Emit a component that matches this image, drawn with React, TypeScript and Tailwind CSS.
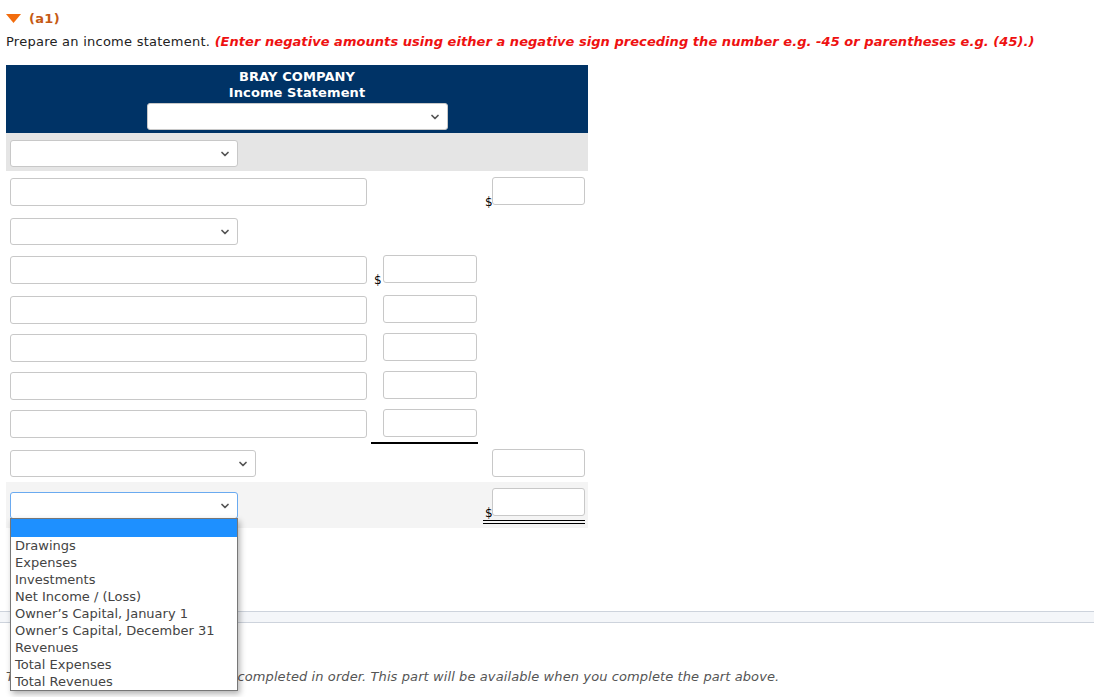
import { ChevronDown } from 'lucide-react';

const font = "font-['Verdana','DejaVu_Sans',sans-serif]";

function Select({ w, focused }: { w: string; focused?: boolean }) {
  return (
    <div
      className={`${w} h-[27px] bg-white rounded-[3px] border flex items-center justify-end pr-[6px] ${
        focused ? 'border-[#6aaaf0]' : 'border-[#c8c8c8]'
      }`}
    >
      <ChevronDown size={12} strokeWidth={3.5} className="text-[#555]" />
    </div>
  );
}

function Input({ w }: { w: string }) {
  return <div className={`${w} h-[28px] bg-white rounded-[3px] border border-[#c8c8c8]`} />;
}

function Dollar() {
  return <span className="block text-[12px] leading-none text-black w-[9px] -mb-[3px]">$</span>;
}

const options = [
  'Drawings',
  'Expenses',
  'Investments',
  'Net Income / (Loss)',
  'Owner’s Capital, January 1',
  'Owner’s Capital, December 31',
  'Revenues',
  'Total Expenses',
  'Total Revenues',
];

// label cell | middle amount cell | right amount cell
function Row({
  h,
  label,
  mid,
  right,
  midLine,
  rightLine,
}: {
  h: string;
  label: React.ReactNode;
  mid?: 'dollar' | 'plain';
  right?: 'dollar' | 'plain';
  midLine?: boolean;
  rightLine?: boolean;
}) {
  return (
    <div className={`flex ${h}`}>
      <div className="w-[365px] pl-[4px] pt-[7px]">{label}</div>
      <div className="w-[112px] pt-[6px]">
        {mid && (
          <div className="flex items-end h-[28px]">
            <span className="w-[12px] pl-[3px]">{mid === 'dollar' && <Dollar />}</span>
            <Input w="w-[94px]" />
          </div>
        )}
        {midLine && <div className="mt-[5px] h-[2px] bg-black w-[107px]" />}
      </div>
      <div className="w-[105px] pt-[6px]">
        {right && (
          <div className="flex items-end h-[28px]">
            <span className="w-[9px] pl-[2px]">{right === 'dollar' && <Dollar />}</span>
            <Input w="w-[93px]" />
          </div>
        )}
        {rightLine && <div className="mt-[5px] h-[2px] bg-black w-[104px]" />}
      </div>
    </div>
  );
}

export default function App() {
  return (
    <div className={`${font} relative w-[1094px] h-[697px] bg-white text-[13px] text-[#222] overflow-hidden`}>
      <div className="px-[6px] pt-[10px]">
        <div className="flex items-center gap-[8px] h-[17px]">
          <svg width="15" height="9" viewBox="0 0 15 9">
            <polygon points="0,0 15,0 7.5,9" fill="#f26c0d" />
          </svg>
          <span className="font-bold text-[#c65a14] tracking-[0.3px]">(a1)</span>
        </div>
        <p className="mt-[7px] leading-[16px] tracking-[0.25px]">
          Prepare an income statement.{' '}
          <span className="font-bold italic text-[#ee1111] tracking-[0.05px]">
            (Enter negative amounts using either a negative sign preceding the number e.g. -45 or parentheses e.g.
            (45).)
          </span>
        </p>
      </div>

      <div className="ml-[6px] mt-[15px] w-[582px]">
        <div className="h-[68px] bg-[#003366] flex flex-col items-center pt-[4px] text-white font-bold leading-[16px] tracking-[0.1px]">
          <span>BRAY COMPANY</span>
          <span>Income Statement</span>
          <div className="mt-[2px]">
            <Select w="w-[301px]" />
          </div>
        </div>
        <div className="h-[38px] bg-[#e5e5e5] pl-[4px] pt-[7px]">
          <Select w="w-[228px]" />
        </div>

        <Row h="h-[40px]" label={<Input w="w-[357px]" />} right="dollar" />
        <Row h="h-[38px]" label={<Select w="w-[228px]" />} />
        <Row h="h-[40px]" label={<Input w="w-[357px]" />} mid="dollar" />
        <Row h="h-[38px]" label={<Input w="w-[357px]" />} mid="plain" />
        <Row h="h-[38px]" label={<Input w="w-[357px]" />} mid="plain" />
        <Row h="h-[38px]" label={<Input w="w-[357px]" />} mid="plain" />
        <Row h="h-[40px]" label={<Input w="w-[357px]" />} mid="plain" midLine />
        <Row h="h-[39px]" label={<Select w="w-[246px]" />} right="plain" rightLine />

        <div className="relative flex h-[46px] bg-[#f4f4f4]">
          <div className="w-[477px] pl-[4px] pt-[10px]">
            <Select w="w-[228px]" focused />
          </div>
          <div className="w-[105px] pt-[6px]">
            <div className="flex items-end h-[28px]">
              <span className="w-[9px] pl-[2px]">
                <Dollar />
              </span>
              <Input w="w-[93px]" />
            </div>
            <div className="mt-[4px] w-[102px] h-[4px] border-y border-black" />
          </div>

          <div className="absolute left-[4px] top-[36px] w-[228px] bg-white border border-[#777] shadow-[2px_3px_6px_rgba(0,0,0,0.3)] z-10 text-[#444] leading-[17px]">
            <div className="h-[18px] bg-[#1e90ff]" />
            {options.map((o) => (
              <div key={o} className="pl-[4px] h-[17px]">
                {o}
              </div>
            ))}
          </div>
        </div>
      </div>

      <div className="mt-[83px] h-[12px] bg-[#f4f6f9] border-y border-[#cdd3dc]" />

      <p className="mt-[46px] pl-[6px] italic text-[#555] leading-[16px] tracking-[0.1px]">
        The parts of this question must be completed in order. This part will be available when you complete the
        part above.
      </p>
    </div>
  );
}
